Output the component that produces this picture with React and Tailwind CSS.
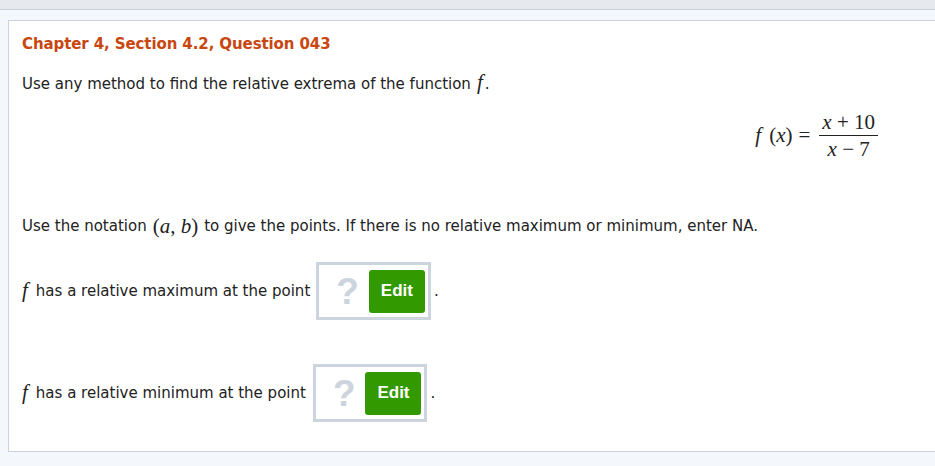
import React from "react";

const verdana = { fontFamily: '"DejaVu Sans", Verdana, sans-serif' };

function AnswerBox() {
  return (
    <span className="inline-flex items-center border-[3px] border-[#ccd4de] bg-white h-[58px] pl-[17px] pr-[3px] gap-[10px] align-middle">
      <span className="text-[37px] font-bold text-[#ccd4de] leading-none font-['Liberation_Sans',Arial,sans-serif]">?</span>
      <span className="flex items-center justify-center w-[56px] h-[43px] bg-[#339900] rounded-[3px] text-white font-bold text-[17px] font-['Liberation_Sans',Arial,sans-serif]">
        Edit
      </span>
    </span>
  );
}

export default function App() {
  return (
    <div className="w-[935px] h-[466px] bg-[#f4f7fb] overflow-hidden flex flex-col" style={verdana}>
      <div className="h-[10px] bg-[#e6eaee] border-b border-[#c9d0d8] shrink-0" />
      <div className="pt-[10px] pl-[8px]">
        <div className="h-[432px] bg-white border-l border-t border-b border-[#ccd3dd] pl-[13px] pt-[12px] text-[15px] text-[#222]">
          <div className="text-[15px] font-bold text-[#c8460f] h-[22px] leading-[22px] tracking-[-0.1px]">
            Chapter 4, Section 4.2, Question 043
          </div>
          <div className="mt-[16px] h-[22px] leading-[22px] flex items-baseline">
            <span>Use any method to find the relative extrema of the function</span>
            <span className="ml-[6px] font-['Liberation_Serif',serif] italic text-[21px]">f</span>
            <span className="ml-[2px]">.</span>
          </div>
          <div className="mt-[16px] flex justify-end pr-[57px] font-['Liberation_Serif',serif] text-[21px] text-[#222]">
            <div className="flex items-center gap-[9px]">
              <span className="flex items-center">
                <span className="italic">f</span>
                <span className="ml-[8px]">(<span className="italic">x</span>)</span>
                <span className="ml-[6px]">=</span>
              </span>
              <span className="inline-flex flex-col items-center">
                <span className="leading-[26px] px-[3px]">
                  <span className="italic">x</span> + 10
                </span>
                <span className="w-full h-[1px] bg-[#222]" />
                <span className="leading-[26px]">
                  <span className="italic">x</span> − 7
                </span>
              </span>
            </div>
          </div>
          <div className="mt-[52px] h-[24px] leading-[24px] flex items-center">
            <span>Use the notation</span>
            <span className="mx-[6px] font-['Liberation_Serif',serif] text-[21px]">
              (<span className="italic">a</span>, <span className="italic">b</span>)
            </span>
            <span>to give the points. If there is no relative maximum or minimum, enter NA.</span>
          </div>
          <div className="mt-[24px] flex items-center h-[58px]">
            <span className="font-['Liberation_Serif',serif] italic text-[21px] mr-[8px]">f</span>
            <span>has a relative maximum at the point</span>
            <span className="ml-[6px]"><AnswerBox /></span>
            <span className="ml-[3px]">.</span>
          </div>
          <div className="mt-[44px] flex items-center h-[58px]">
            <span className="font-['Liberation_Serif',serif] italic text-[21px] mr-[8px]">f</span>
            <span>has a relative minimum at the point</span>
            <span className="ml-[7px]"><AnswerBox /></span>
            <span className="ml-[3px]">.</span>
          </div>
        </div>
      </div>
    </div>
  );
}
